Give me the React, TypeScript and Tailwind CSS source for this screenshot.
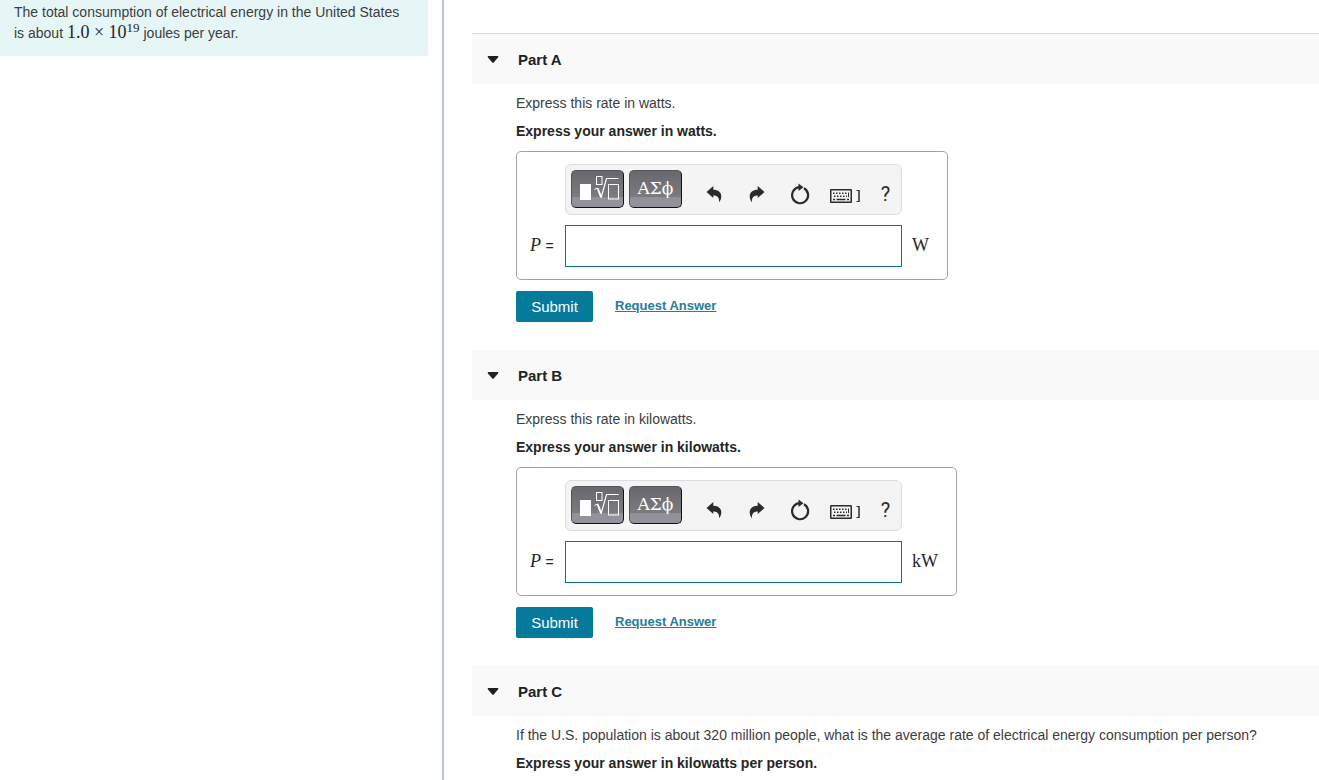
import React from "react";

type PartProps = {
  id: string;
  title: string;
  question: string;
  instruction: string;
  unit?: string;
  first?: boolean;
};

const iconButton = "flex h-6 w-[43px] items-center justify-center text-[#2b2b2b]";
const paletteButton =
  "flex h-[38px] w-[53px] items-center justify-center rounded-[5px] border border-[#55555b] border-r-[#111111] border-b-[#111111] bg-linear-to-b from-[#68686c] from-0% via-[#7c7c80] via-72% to-[#92929a] to-74% text-white";

function TemplatesIcon() {
  return (
    <svg width="42" height="26" viewBox="0 0 42 26" fill="none" stroke="currentColor" aria-hidden="true">
      <rect x="3" y="8" width="11" height="16" fill="currentColor" stroke="none" />
      <rect x="19.500" y="0.500" width="5.500" height="8" />
      <path d="M17.500 13.500L20.500 12" />
      <path d="M20.500 12L24 21" strokeWidth="2" />
      <path d="M24 22L29.500 2.500H41.500" strokeWidth="1.200" />
      <rect x="31.500" y="8.500" width="10" height="14.500" />
    </svg>
  );
}

function UndoIcon() {
  return (
    <svg width="16" height="18" viewBox="0 0 16 18" fill="currentColor" aria-hidden="true">
      <path d="M0.500 7L7.300 1v3.700c4.700 0 8 2.400 8 6.700 0 2.200-.8 4.200-2.300 5.800.5-3.900-1.200-6.600-5.700-6.600V13z" />
    </svg>
  );
}

function RedoIcon() {
  return (
    <svg width="16" height="18" viewBox="0 0 16 18" fill="currentColor" aria-hidden="true">
      <path d="M15.500 7L8.700 1v3.700c-4.700 0-8 2.400-8 6.700 0 2.200.8 4.200 2.300 5.800-.5-3.900 1.200-6.600 5.700-6.600V13z" />
    </svg>
  );
}

function ResetIcon() {
  return (
    <svg width="20" height="22" viewBox="0 0 20 22" fill="none" stroke="currentColor" aria-hidden="true">
      <path d="M14 5.200A8 8 0 1 1 10 4.200" strokeWidth="2.200" />
      <path d="M8.500 0.500L13.500 4.200L8.500 8z" fill="currentColor" stroke="none" />
    </svg>
  );
}

function KeyboardIcon() {
  return (
    <svg width="37" height="14" viewBox="-6 0 37 14" fill="none" stroke="currentColor" aria-hidden="true">
      <rect x="0.750" y="0.750" width="20.500" height="12.500" rx="0.500" strokeWidth="1.500" />
      <path d="M3 4.250H17M4 7.250H17" strokeWidth="1.500" strokeDasharray="1.500 1.500" />
      <path d="M18.500 3.500V8" />
      <path d="M3 10.500H5M6.500 10.500H15.500M17 10.500H19" strokeWidth="1.500" />
      <path d="M26.500 1.500H29.500M26.500 12.500H29.500" />
      <path d="M29 1.500V12.500" strokeWidth="1.500" />
    </svg>
  );
}

function AnswerBox({ id, unit }: { id: string; unit: string }) {
  return (
    <div className="mt-[10px] grid w-fit grid-cols-[35px_337px_auto] items-center gap-y-[10px] rounded-[5px] border border-[#a3a3a3] py-3 pr-[18px] pl-[13px]">
      <div
        role="toolbar"
        aria-label="Equation tools"
        className="col-start-2 flex h-[51px] items-start rounded-md border border-[#dddddd] bg-[#f4f4f4] px-[5px] pt-[5px]"
      >
        <div className="flex gap-[5px]">
          <button type="button" aria-label="Templates" className={paletteButton}>
            <TemplatesIcon />
          </button>
          <button
            type="button"
            aria-label="Symbols"
            className={`${paletteButton} pb-[2px] font-['DejaVu_Serif','Liberation_Serif',serif] text-[17px]`}
          >
            ΑΣϕ
          </button>
        </div>
        <div className="flex pt-3 pl-[10px]">
          <button type="button" aria-label="Undo" className={iconButton}>
            <UndoIcon />
          </button>
          <button type="button" aria-label="Redo" className={iconButton}>
            <RedoIcon />
          </button>
          <button type="button" aria-label="Reset" className={iconButton}>
            <ResetIcon />
          </button>
          <button type="button" aria-label="Keyboard shortcuts" className={`${iconButton} pt-1`}>
            <KeyboardIcon />
          </button>
          <button type="button" aria-label="Help" className={`${iconButton} font-[Roboto,sans-serif] text-xl`}>
            ?
          </button>
        </div>
      </div>
      <label
        htmlFor={id}
        className="col-start-1 pb-[2px] font-['Liberation_Serif',serif] text-lg leading-6 text-[#252525]"
      >
        <i>P</i> <span className="font-['Liberation_Sans',sans-serif] text-sm">=</span>
      </label>
      <input
        id={id}
        type="text"
        className="h-[42px] w-full border border-[#136f8e] bg-white px-2 text-base outline-none"
      />
      <span className="pb-[2px] pl-[10px] font-['Liberation_Serif',serif] text-lg leading-6 text-[#252525]">{unit}</span>
    </div>
  );
}

function Part({ id, title, question, instruction, unit, first }: PartProps) {
  return (
    <section>
      <h2 className={`bg-[#f9f9f9] ${first ? "border-t border-[#d9d9d9]" : ""}`}>
        <button
          type="button"
          aria-expanded="true"
          className="flex h-[50px] w-full items-center pt-[2px] pl-[15px] text-left text-[15px] leading-5 font-bold text-[#222222]"
        >
          <svg className="mr-[19px]" width="12" height="9" viewBox="0 0 12 9" fill="currentColor" aria-hidden="true">
            <path d="M1.500 0h9q1.500 0 .6 1.200L7 6.300q-1 1-2 0L.9 1.200Q0 0 1.500 0z" />
          </svg>
          {title}
        </button>
      </h2>
      <div className="pt-[9px] pb-7 pl-11 text-sm leading-5">
        <p>{question}</p>
        <p className="mt-2 font-bold text-[#252525]">{instruction}</p>
        {unit && (
          <>
            <AnswerBox id={id} unit={unit} />
            <div className="mt-[11px] flex items-center gap-[22px]">
              <button
                type="button"
                className="h-[31px] w-[77px] rounded-[2px] bg-[#057a9b] text-[15px] leading-5 text-white"
              >
                Submit
              </button>
              <a href="#" className="pb-[2px] text-[13px] font-bold text-[#287c99] underline">
                Request Answer
              </a>
            </div>
          </>
        )}
      </div>
    </section>
  );
}

export default function App() {
  return (
    <div className="flex h-screen overflow-hidden bg-white font-['Liberation_Sans',Arial,sans-serif] text-[#3d3d3d]">
      <aside className="w-[444px] shrink-0 border-r-2 border-[#b5c9d5] pr-[14px]">
        <p className="bg-[#e6f6f6] pt-[2px] pr-4 pb-3 pl-[14px] text-sm leading-[21px]">
          The total consumption of electrical energy in the United States is about{" "}
          <span className="font-['Liberation_Serif',serif] text-lg leading-none text-[#252525]">
            1.0 × 10<sup className="text-[13px]">19</sup>
          </span>{" "}
          joules per year.
        </p>
      </aside>
      <main className="min-w-0 flex-1 pt-[33px] pl-7">
        <Part
          id="answer-a"
          title="Part A"
          question="Express this rate in watts."
          instruction="Express your answer in watts."
          unit="W"
          first
        />
        <Part
          id="answer-b"
          title="Part B"
          question="Express this rate in kilowatts."
          instruction="Express your answer in kilowatts."
          unit="kW"
        />
        <Part
          id="answer-c"
          title="Part C"
          question="If the U.S. population is about 320 million people, what is the average rate of electrical energy consumption per person?"
          instruction="Express your answer in kilowatts per person."
        />
      </main>
    </div>
  );
}
